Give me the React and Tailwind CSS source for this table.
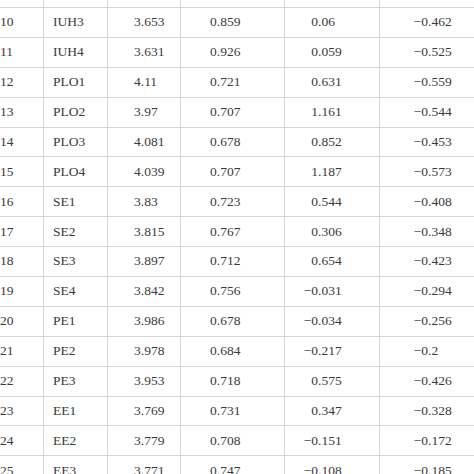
const rows = [
  ["10", "IUH3", "3.653", "0.859", "0.06", "−0.462"],
  ["11", "IUH4", "3.631", "0.926", "0.059", "−0.525"],
  ["12", "PLO1", "4.11", "0.721", "0.631", "−0.559"],
  ["13", "PLO2", "3.97", "0.707", "1.161", "−0.544"],
  ["14", "PLO3", "4.081", "0.678", "0.852", "−0.453"],
  ["15", "PLO4", "4.039", "0.707", "1.187", "−0.573"],
  ["16", "SE1", "3.83", "0.723", "0.544", "−0.408"],
  ["17", "SE2", "3.815", "0.767", "0.306", "−0.348"],
  ["18", "SE3", "3.897", "0.712", "0.654", "−0.423"],
  ["19", "SE4", "3.842", "0.756", "−0.031", "−0.294"],
  ["20", "PE1", "3.986", "0.678", "−0.034", "−0.256"],
  ["21", "PE2", "3.978", "0.684", "−0.217", "−0.2"],
  ["22", "PE3", "3.953", "0.718", "0.575", "−0.426"],
  ["23", "EE1", "3.769", "0.731", "0.347", "−0.328"],
  ["24", "EE2", "3.779", "0.708", "−0.151", "−0.172"],
  ["25", "EE3", "3.771", "0.747", "−0.108", "−0.185"],
]

// decimal-aligned number: integer part right-aligned in a fixed box
function Dec({ value }) {
  const [int, frac] = value.split(".")
  return (
    <span className="flex">
      <span className="w-[20px] text-right">{int}</span>
      {frac !== undefined && <span>.{frac}</span>}
    </span>
  )
}

function Row({ cells, stub }) {
  const h = stub ? "h-[7px]" : "h-[29.9px] border-t border-[#d6d6d6]"
  return (
    <div className={`flex shrink-0 ${h}`}>
      <div className="w-[44px] border-r border-[#d6d6d6] flex items-center pl-0">{cells?.[0]}</div>
      <div className="w-[64px] border-r border-[#d6d6d6] flex items-center pl-[9px]">{cells?.[1]}</div>
      <div className="w-[73px] border-r border-[#d6d6d6] flex items-center pl-[26px]">{cells?.[2]}</div>
      <div className="w-[104px] border-r border-[#d6d6d6] flex items-center pl-[29px]">{cells?.[3]}</div>
      <div className="w-[95px] border-r border-[#d6d6d6] flex items-center pl-[13px]">
        {cells && <Dec value={cells[4]} />}
      </div>
      <div className="flex-1 flex items-center pl-[28px]">
        {cells && <Dec value={cells[5]} />}
      </div>
    </div>
  )
}

export default function App() {
  return (
    <div className="w-[474px] h-[474px] overflow-hidden bg-white text-[#3a3a3a] text-[13.5px] flex flex-col font-['Liberation_Serif',serif]">
      <Row stub />
      {rows.map((r) => (
        <Row key={r[0]} cells={r} />
      ))}
    </div>
  )
}
